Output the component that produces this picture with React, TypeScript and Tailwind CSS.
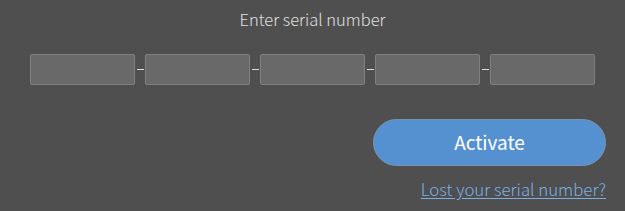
import React, { useState } from 'react';

const App: React.FC = () => {
  const [parts, setParts] = useState(['', '', '', '', '']);

  const update = (i: number, v: string) => {
    const next = [...parts];
    next[i] = v;
    setParts(next);
  };

  return (
    <div
      className="w-[625px] h-[211px] bg-[#4f4f4f] flex flex-col overflow-hidden"
      style={{ fontFamily: '"Noto Sans CJK JP", "Noto Sans", sans-serif' }}
    >
      {/* Title */}
      <div className="pt-[8px] h-[54px] text-center text-[16.5px] font-light text-[#e0e0e0] leading-[22px]">
        Enter serial number
      </div>

      {/* Serial inputs */}
      <div className="flex items-center pl-[30px]">
        {parts.map((p, i) => (
          <React.Fragment key={i}>
            {i > 0 && (
              <div className="w-[10px] flex justify-center">
                <div className="w-[7px] h-px bg-[#dcdcdc]" />
              </div>
            )}
            <input
              value={p}
              onChange={(e) => update(i, e.target.value)}
              className="w-[105px] h-[31px] bg-[#696969] border border-[#808080] rounded-[2px] outline-none text-white text-[14px] px-2"
            />
          </React.Fragment>
        ))}
      </div>

      {/* Actions */}
      <div className="flex flex-col items-end pr-[19px] pt-[34px]">
        <button className="w-[233px] h-[47px] pb-[3px] rounded-full bg-[#5591d0] border border-[#7b93ad] text-white text-[19px] leading-none">
          Activate
        </button>
        <a
          href="#"
          className="mt-[13px] text-[16.8px] font-light leading-[20px] text-[#7cb0e4] underline underline-offset-2"
        >
          Lost your serial number?
        </a>
      </div>
    </div>
  );
};

export default App;
